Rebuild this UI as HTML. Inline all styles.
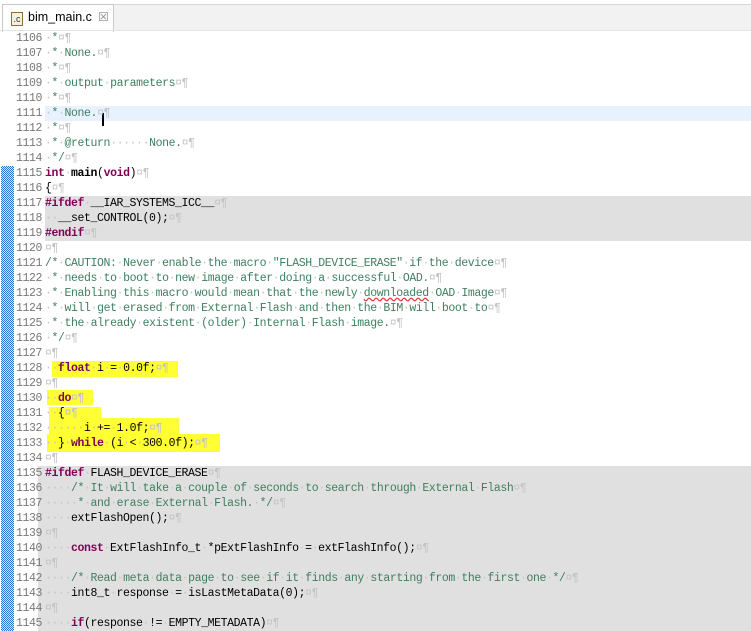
<!DOCTYPE html>
<html><head><meta charset="utf-8">
<style>
html,body{margin:0;padding:0;background:#fff;width:751px;height:631px;overflow:hidden;position:relative;font-family:"Liberation Mono",monospace;}
.tabbar{position:absolute;left:0;top:0;width:751px;height:30px;background:#fff;}
.tabbar .strip{position:absolute;left:113px;top:4px;right:0;height:26px;background:#f2f2f2;border-top:1px solid #d8d8d8;}
.tab{position:absolute;left:2px;top:4px;width:110px;height:27px;background:#fff;border:1px solid #c8c8c8;border-bottom:none;font-family:"Liberation Sans",sans-serif;font-size:12.5px;}
.tab .ic{position:absolute;left:8px;top:7px;width:10px;height:12px;border:1px solid #8a6d3b;background:#f7f0dc;font-size:9px;line-height:12px;color:#234;text-align:center;}
.tab .nm{position:absolute;left:25px;top:5px;color:#000;}
.tab .x{position:absolute;left:95px;top:5px;color:#888;font-size:12px;}
.bar{position:absolute;left:1px;top:166px;width:13px;height:465px;background:repeating-conic-gradient(#2a72d0 0 25%,#dbe8f8 0 50%) 0 0/2px 2px;}
.hl{position:absolute;height:15px;}
.ln{position:absolute;left:0;height:15px;width:751px;font-size:11.5px;letter-spacing:-0.4px;line-height:15px;white-space:pre;}
.n{position:absolute;left:16px;width:27px;color:#787878;}
.t{position:absolute;left:45px;}
.w{color:#c4c4c4;}
.c{color:#3f7f5f;}
.k{color:#7f0055;font-weight:bold;}
.y{background:#ffff33;}
</style></head><body>
<div class="tabbar"><div class="strip"></div>
<div class="tab"><div class="ic">.c</div><div class="nm">bim_main.c</div><div class="x">☒</div></div></div>
<div style="position:absolute;left:0;top:30px;width:751px;height:1px;background:#e4e4e4"></div>

<div class="hl" style="left:45px;top:106px;width:706px;background:#e8f2fe"></div>
<div class="hl" style="left:45px;top:196px;width:706px;height:45px;background:#e0e0e0"></div>
<div class="hl" style="left:38px;top:466px;width:713px;height:165px;background:#e0e0e0"></div>
<div class="hl y" style="left:52px;top:361px;width:126px;height:16px"></div>
<div class="hl y" style="left:47px;top:390px;width:46px;height:15px"></div>
<div class="hl y" style="left:49px;top:407px;width:52px;height:12px"></div>
<div class="hl y" style="left:49px;top:418px;width:130px;height:18px"></div>
<div class="hl y" style="left:47px;top:434px;width:173px;height:18px"></div>
<div style="position:absolute;left:102px;top:113px;width:1.5px;height:13px;background:#000"></div>

<div class="bar"></div>

<div class="ln" style="top:31px"><span class="n">1106</span><span class="t"><span class="w">·</span><span class="c">*</span><span class="w">¤¶</span></span></div>
<div class="ln" style="top:46px"><span class="n">1107</span><span class="t"><span class="w">·</span><span class="c">*<span class="w">·</span>None.</span><span class="w">¤¶</span></span></div>
<div class="ln" style="top:61px"><span class="n">1108</span><span class="t"><span class="w">·</span><span class="c">*</span><span class="w">¤¶</span></span></div>
<div class="ln" style="top:76px"><span class="n">1109</span><span class="t"><span class="w">·</span><span class="c">*<span class="w">·</span>output<span class="w">·</span>parameters</span><span class="w">¤¶</span></span></div>
<div class="ln" style="top:91px"><span class="n">1110</span><span class="t"><span class="w">·</span><span class="c">*</span><span class="w">¤¶</span></span></div>
<div class="ln" style="top:106px"><span class="n">1111</span><span class="t"><span class="w">·</span><span class="c">*<span class="w">·</span>None.</span><span class="w">¤¶</span></span></div>
<div class="ln" style="top:121px"><span class="n">1112</span><span class="t"><span class="w">·</span><span class="c">*</span><span class="w">¤¶</span></span></div>
<div class="ln" style="top:136px"><span class="n">1113</span><span class="t"><span class="w">·</span><span class="c">*<span class="w">·</span>@return<span class="w">······</span>None.</span><span class="w">¤¶</span></span></div>
<div class="ln" style="top:151px"><span class="n">1114</span><span class="t"><span class="w">·</span><span class="c">*/</span><span class="w">¤¶</span></span></div>
<div class="ln" style="top:166px"><span class="n">1115</span><span class="t"><span class="k">int</span><span class="w">·</span><b>main</b>(<span class="k">void</span>)<span class="w">¤¶</span></span></div>
<div class="ln" style="top:181px"><span class="n">1116</span><span class="t">{<span class="w">¤¶</span></span></div>
<div class="ln" style="top:196px"><span class="n">1117</span><span class="t"><span class="k">#ifdef</span><span class="w">·</span>__IAR_SYSTEMS_ICC__<span class="w">¤¶</span></span></div>
<div class="ln" style="top:211px"><span class="n">1118</span><span class="t"><span class="w">··</span>__set_CONTROL(0);<span class="w">¤¶</span></span></div>
<div class="ln" style="top:226px"><span class="n">1119</span><span class="t"><span class="k">#endif</span><span class="w">¤¶</span></span></div>
<div class="ln" style="top:241px"><span class="n">1120</span><span class="t"><span class="w">¤¶</span></span></div>
<div class="ln" style="top:256px"><span class="n">1121</span><span class="t c">/*<span class="w">·</span>CAUTION:<span class="w">·</span>Never<span class="w">·</span>enable<span class="w">·</span>the<span class="w">·</span>macro<span class="w">·</span>"FLASH_DEVICE_ERASE"<span class="w">·</span>if<span class="w">·</span>the<span class="w">·</span>device<span class="w">¤¶</span></span></div>
<div class="ln" style="top:271px"><span class="n">1122</span><span class="t c"><span class="w">·</span>*<span class="w">·</span>needs<span class="w">·</span>to<span class="w">·</span>boot<span class="w">·</span>to<span class="w">·</span>new<span class="w">·</span>image<span class="w">·</span>after<span class="w">·</span>doing<span class="w">·</span>a<span class="w">·</span>successful<span class="w">·</span>OAD.<span class="w">¤¶</span></span></div>
<div class="ln" style="top:286px"><span class="n">1123</span><span class="t c"><span class="w">·</span>*<span class="w">·</span>Enabling<span class="w">·</span>this<span class="w">·</span>macro<span class="w">·</span>would<span class="w">·</span>mean<span class="w">·</span>that<span class="w">·</span>the<span class="w">·</span>newly<span class="w">·</span><span style="text-decoration:underline wavy #e03030">downloaded</span><span class="w">·</span>OAD<span class="w">·</span>Image<span class="w">¤¶</span></span></div>
<div class="ln" style="top:301px"><span class="n">1124</span><span class="t c"><span class="w">·</span>*<span class="w">·</span>will<span class="w">·</span>get<span class="w">·</span>erased<span class="w">·</span>from<span class="w">·</span>External<span class="w">·</span>Flash<span class="w">·</span>and<span class="w">·</span>then<span class="w">·</span>the<span class="w">·</span>BIM<span class="w">·</span>will<span class="w">·</span>boot<span class="w">·</span>to<span class="w">¤¶</span></span></div>
<div class="ln" style="top:316px"><span class="n">1125</span><span class="t c"><span class="w">·</span>*<span class="w">·</span>the<span class="w">·</span>already<span class="w">·</span>existent<span class="w">·</span>(older)<span class="w">·</span>Internal<span class="w">·</span>Flash<span class="w">·</span>image.<span class="w">¤¶</span></span></div>
<div class="ln" style="top:331px"><span class="n">1126</span><span class="t c"><span class="w">·</span>*/<span class="w">¤¶</span></span></div>
<div class="ln" style="top:346px"><span class="n">1127</span><span class="t"><span class="w">¤¶</span></span></div>
<div class="ln" style="top:361px"><span class="n">1128</span><span class="t"><span class="w">··</span><span class="k">float</span><span class="w">·</span>i<span class="w">·</span>=<span class="w">·</span>0.0f;<span class="w">¤¶</span></span></div>
<div class="ln" style="top:376px"><span class="n">1129</span><span class="t"><span class="w">¤¶</span></span></div>
<div class="ln" style="top:391px"><span class="n">1130</span><span class="t"><span class="w">··</span><span class="k">do</span><span class="w">¤¶</span></span></div>
<div class="ln" style="top:406px"><span class="n">1131</span><span class="t"><span class="w">··</span>{<span class="w">¤¶</span></span></div>
<div class="ln" style="top:421px"><span class="n">1132</span><span class="t"><span class="w">······</span>i<span class="w">·</span>+=<span class="w">·</span>1.0f;<span class="w">¤¶</span></span></div>
<div class="ln" style="top:436px"><span class="n">1133</span><span class="t"><span class="w">··</span>}<span class="w">·</span><span class="k">while</span><span class="w">·</span>(i<span class="w">·</span>&lt;<span class="w">·</span>300.0f);<span class="w">¤¶</span></span></div>
<div class="ln" style="top:451px"><span class="n">1134</span><span class="t"><span class="w">¤¶</span></span></div>
<div class="ln" style="top:466px"><span class="n">1135</span><span class="t"><span class="k">#ifdef</span><span class="w">·</span>FLASH_DEVICE_ERASE<span class="w">¤¶</span></span></div>
<div class="ln" style="top:481px"><span class="n">1136</span><span class="t"><span class="w">····</span><span class="c">/*<span class="w">·</span>It<span class="w">·</span>will<span class="w">·</span>take<span class="w">·</span>a<span class="w">·</span>couple<span class="w">·</span>of<span class="w">·</span>seconds<span class="w">·</span>to<span class="w">·</span>search<span class="w">·</span>through<span class="w">·</span>External<span class="w">·</span>Flash</span><span class="w">¤¶</span></span></div>
<div class="ln" style="top:496px"><span class="n">1137</span><span class="t"><span class="w">·····</span><span class="c">*<span class="w">·</span>and<span class="w">·</span>erase<span class="w">·</span>External<span class="w">·</span>Flash.<span class="w">·</span>*/</span><span class="w">¤¶</span></span></div>
<div class="ln" style="top:511px"><span class="n">1138</span><span class="t"><span class="w">····</span>extFlashOpen();<span class="w">¤¶</span></span></div>
<div class="ln" style="top:526px"><span class="n">1139</span><span class="t"><span class="w">¤¶</span></span></div>
<div class="ln" style="top:541px"><span class="n">1140</span><span class="t"><span class="w">····</span><span class="k">const</span><span class="w">·</span>ExtFlashInfo_t<span class="w">·</span>*pExtFlashInfo<span class="w">·</span>=<span class="w">·</span>extFlashInfo();<span class="w">¤¶</span></span></div>
<div class="ln" style="top:556px"><span class="n">1141</span><span class="t"><span class="w">¤¶</span></span></div>
<div class="ln" style="top:571px"><span class="n">1142</span><span class="t"><span class="w">····</span><span class="c">/*<span class="w">·</span>Read<span class="w">·</span>meta<span class="w">·</span>data<span class="w">·</span>page<span class="w">·</span>to<span class="w">·</span>see<span class="w">·</span>if<span class="w">·</span>it<span class="w">·</span>finds<span class="w">·</span>any<span class="w">·</span>starting<span class="w">·</span>from<span class="w">·</span>the<span class="w">·</span>first<span class="w">·</span>one<span class="w">·</span>*/</span><span class="w">¤¶</span></span></div>
<div class="ln" style="top:586px"><span class="n">1143</span><span class="t"><span class="w">····</span>int8_t<span class="w">·</span>response<span class="w">·</span>=<span class="w">·</span>isLastMetaData(0);<span class="w">¤¶</span></span></div>
<div class="ln" style="top:601px"><span class="n">1144</span><span class="t"><span class="w">¤¶</span></span></div>
<div class="ln" style="top:616px"><span class="n">1145</span><span class="t"><span class="w">····</span><span class="k">if</span>(response<span class="w">·</span>!=<span class="w">·</span>EMPTY_METADATA)<span class="w">¤¶</span></span></div>
</body></html>
